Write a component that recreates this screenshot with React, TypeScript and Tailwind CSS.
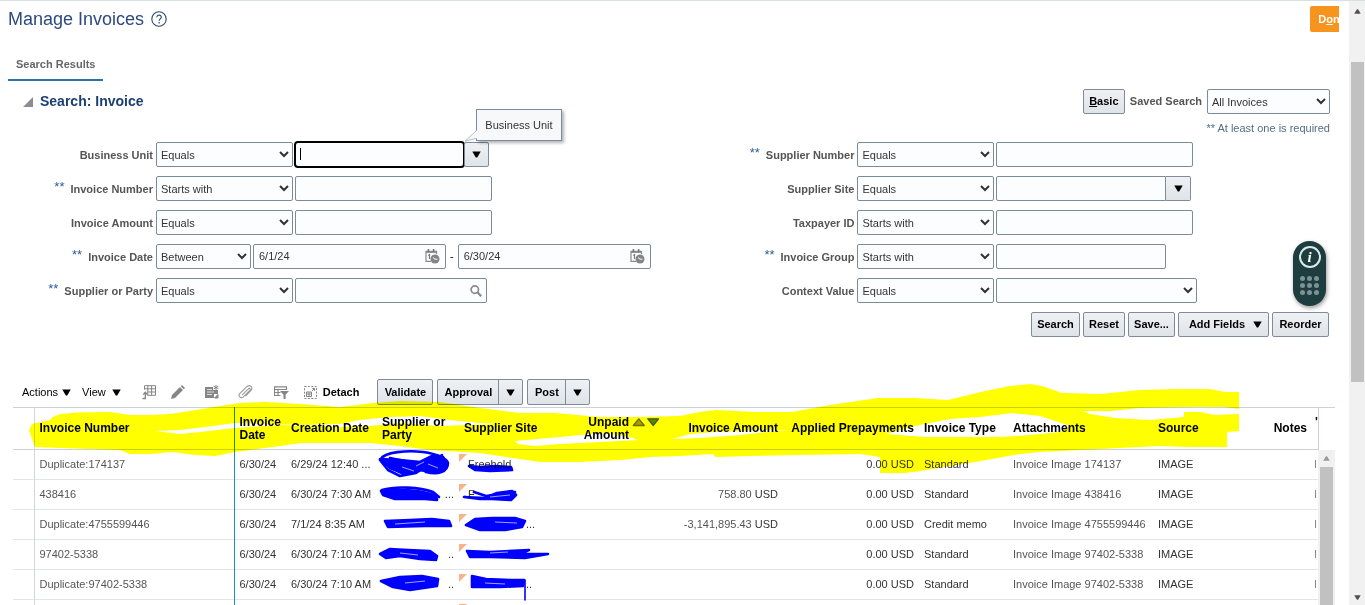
import React from "react";

const fieldBox = "h-[25px] rounded-[2px] border border-[#7d8b96] bg-[#fcfdfe] text-[11px] text-[#333]";
const buttonBox =
  "flex h-[25px] items-center justify-center rounded-[2px] border border-[#7f8b9b] bg-linear-to-b from-[#eff1f4] to-[#dfe4e9] text-[11px] font-bold text-black";

function Triangle({ className = "" }: { className?: string }) {
  return (
    <svg className={className} width="9" height="7" viewBox="0 0 9 7" aria-hidden="true">
      <path d="M0.3 0.5h8.4L5.2 6.5H3.8z" fill="currentColor" />
    </svg>
  );
}

function CalendarIcon() {
  return (
    <svg width="15" height="15" viewBox="0 0 15 15" fill="none" aria-hidden="true">
      <path d="M6 12.3H1V2.3h10.5V5" stroke="#8a8a8a" strokeWidth="1.2" />
      <path d="M1 3.2h10.5" stroke="#8a8a8a" strokeWidth="1.4" />
      <path d="M3.4 0v3M8.6 0v3" stroke="#777" strokeWidth="1.6" />
      <path d="M3.3 6.4L4.5 5.6V10" stroke="#777" strokeWidth="1.2" />
      <circle cx="10" cy="10" r="4.5" fill="#858585" />
      <path d="M8 8.6l2 1.6h2.4" stroke="#fff" strokeWidth="1" />
    </svg>
  );
}

function SearchGlyph() {
  return (
    <svg width="12" height="12" viewBox="0 0 12 12" fill="none" stroke="#8a8a8a" aria-hidden="true">
      <circle cx="4.8" cy="4.6" r="3.7" strokeWidth="1.7" />
      <path d="M7.5 7.3l3.7 3.9" strokeWidth="2.2" />
    </svg>
  );
}

type Kind = "text" | "combo" | "focus" | "short" | "dates" | "lookup" | "select";

interface Field {
  label: string;
  starred?: boolean;
  op: string;
  kind: Kind;
}

const leftFields: Field[] = [
  { label: "Business Unit", op: "Equals", kind: "focus" },
  { label: "Invoice Number", starred: true, op: "Starts with", kind: "text" },
  { label: "Invoice Amount", op: "Equals", kind: "text" },
  { label: "Invoice Date", starred: true, op: "Between", kind: "dates" },
  { label: "Supplier or Party", starred: true, op: "Equals", kind: "lookup" },
];

const rightFields: Field[] = [
  { label: "Supplier Number", starred: true, op: "Equals", kind: "text" },
  { label: "Supplier Site", op: "Equals", kind: "combo" },
  { label: "Taxpayer ID", op: "Starts with", kind: "text" },
  { label: "Invoice Group", starred: true, op: "Starts with", kind: "short" },
  { label: "Context Value", op: "Equals", kind: "select" },
];

function DateBox({ value, label, id }: { value: string; label: string; id?: string }) {
  return (
    <span className={`${fieldBox} flex w-[193px] items-center pr-[5px]`}>
      <input id={id} aria-label={label} defaultValue={value} className="min-w-0 flex-1 pl-[5px] outline-none" />
      <button type="button" aria-label={`Pick ${label}`}>
        <CalendarIcon />
      </button>
    </span>
  );
}

function FieldControl({ field, id }: { field: Field; id: string }) {
  switch (field.kind) {
    case "focus":
      return (
        <div className="relative flex">
          <input
            id={id}
            className="h-[25px] w-[169px] rounded-[3px] bg-[#fcfdfe] px-[5px] text-[11px] outline-2 -outline-offset-1 outline-black"
          />
          <span className="absolute top-[6px] left-[5px] h-3 w-px bg-black" />
          <button type="button" aria-label="Business Unit list" className={`${buttonBox} w-[25px]`}>
            <Triangle />
          </button>
          <div
            role="tooltip"
            className="absolute -top-[33px] left-[181px] flex h-8 w-[86px] items-center justify-center border border-[#7d8b9b] bg-[#f7f8f9] text-[11px] whitespace-nowrap text-[#333] shadow-[2px_2px_3px_rgba(0,0,0,0.3)]"
          >
            Business Unit
            <svg className="absolute top-[18px] -left-[13px]" width="14" height="14" viewBox="0 0 14 14" aria-hidden="true">
              <path d="M13.5 2L1 13.2 13.5 10z" fill="#f7f8f9" />
              <path d="M12.5 2.5L1 13.2 13 10.2" fill="none" stroke="#b4bcc4" />
            </svg>
          </div>
        </div>
      );
    case "combo":
      return (
        <div className="flex">
          <input id={id} className={`${fieldBox} w-[170px] rounded-r-none px-[5px]`} />
          <button type="button" aria-label={`${field.label} list`} className={`${buttonBox} w-[25px] rounded-l-none border-l-0`}>
            <Triangle />
          </button>
        </div>
      );
    case "dates":
      return (
        <div className="flex items-center gap-1 text-[11px]">
          <DateBox id={id} value="6/1/24" label="start date" />
          <span>-</span>
          <DateBox value="6/30/24" label="end date" />
        </div>
      );
    case "lookup":
      return (
        <span className={`${fieldBox} flex w-[192px] items-center pr-1`}>
          <input id={id} className="min-w-0 flex-1 pl-[5px] outline-none" />
          <button type="button" aria-label="Find supplier">
            <SearchGlyph />
          </button>
        </span>
      );
    case "short":
      return <input id={id} className={`${fieldBox} w-[170px] px-[5px]`} />;
    case "select":
      return (
        <select id={id} className={`${fieldBox} w-[201px]`}>
          <option></option>
        </select>
      );
    default:
      return <input id={id} className={`${fieldBox} w-[197px] px-[5px]`} />;
  }
}

function FieldColumn({ fields, prefix }: { fields: Field[]; prefix: string }) {
  return (
    <div className="flex flex-col gap-[9px]">
      {fields.map((f, i) => {
        const id = `${prefix}${i}`;
        return (
          <div key={id} className="flex items-center">
            <label htmlFor={id} className="flex w-[153px] justify-end gap-1.5 text-[11px] leading-4 font-bold text-[#555]">
              {f.starred && <span className="-mt-0.5 text-[13px] font-normal text-[#2a6099]">**</span>}
              {f.label}
            </label>
            <select
              aria-label={`${f.label} operator`}
              className={`${fieldBox} mr-0.5 ml-[3px] ${f.kind === "dates" ? "w-[95px]" : "w-[137px]"}`}
            >
              <option>{f.op}</option>
            </select>
            <FieldControl field={f} id={id} />
          </div>
        );
      })}
    </div>
  );
}

function ToolbarIcons() {
  const c = "#858585";
  return (
    <div className="ml-[21px] flex items-center">
      <button type="button" aria-label="Create" className="w-[29px]">
        <svg width="14" height="15" viewBox="0 0 14 15" fill="none" stroke={c}>
          <path d="M2.5 4.5V.7h11v9.6H5.5M2.5 3.8h11M5.8.7v9.6M9.6.7v9.6M5.5 7h8" />
          <path d="M.5 13.5h2.8V8M1.2 9.6L3.3 7.2l2.1 2.4" strokeWidth="1.3" />
        </svg>
      </button>
      <button type="button" aria-label="Edit" className="w-[34px]">
        <svg width="14" height="14" viewBox="0 0 14 14" fill={c}>
          <path d="M0 14l1-4L9 2l3 3-8 8zM9.8 1.2L11 0l3 3-1.2 1.2z" />
        </svg>
      </button>
      <button type="button" aria-label="Duplicate" className="w-[33px]">
        <svg width="14" height="14" viewBox="0 0 14 14" fill="none" stroke={c}>
          <path d="M0 2h8v3h5v4H9v4H0z" fill={c} stroke="none" />
          <path d="M2 4.5h5M2 7h7M2 9.5h5" stroke="#ddd" />
          <path d="M11 0v5M8.6 1.2l4.8 2.6M13.4 1.2L8.6 3.8" />
          <path d="M13 9.5L9.5 13H13z" fill={c} />
        </svg>
      </button>
      <button type="button" aria-label="Attach" className="w-9">
        <svg width="15" height="14" viewBox="0 0 15 14" fill="none" stroke="#9a9a9a" strokeWidth="1.1">
          <path d="M4 10.2l6.4-6.3c1.2-1.1 2.6.2 1.5 1.4l-6.5 6.5c-2.5 2.2-5.9-1-3.5-3.5L8.8 1.7c3-2.8 6.8.8 4 3.9L7.5 11" />
        </svg>
      </button>
      <button type="button" aria-label="Query by example" className="w-[30px]">
        <svg width="15" height="13" viewBox="0 0 15 13" fill="none" stroke={c}>
          <path d="M.5.8h12v2.7H.5zM.5 3.5v3h6M.5 6.5v3h6M4 3.5v6" strokeWidth="1.2" />
          <path d="M6 5h9l-3.4 3.8V13H9.5V8.8z" fill={c} stroke="none" />
        </svg>
      </button>
      <button type="button" className="flex items-center gap-1.5 text-[11px] font-bold text-black">
        <svg width="13" height="13" viewBox="0 0 13 13" fill="none" stroke={c}>
          <path d="M.5.5h12v12H.5z" strokeDasharray="2 1.4" />
          <path d="M2.5 6h5v4.5h-5zM2.5 8h5M5 6v4.5M8 5l2.5-2.5M8.2 2.5h2.3v2.3" />
        </svg>
        Detach
      </button>
    </div>
  );
}

function MenuButton({ label, width }: { label: string; width: string }) {
  return (
    <div className={`${buttonBox} h-[26px] ${width}`}>
      <button type="button" className="flex-1">
        {label}
      </button>
      <button type="button" aria-label={`${label} options`} className="flex h-full w-6 items-center justify-center border-l border-[#7f8b9b]">
        <Triangle />
      </button>
    </div>
  );
}

const rows = [
  ["Duplicate:174137", "6/29/24 12:40 ...", "", "Standard", "174137"],
  ["438416", "6/30/24 7:30 AM", "758.80", "Standard", "438416"],
  ["Duplicate:4755599446", "7/1/24 8:35 AM", "-3,141,895.43", "Credit memo", "4755599446"],
  ["97402-5338", "6/30/24 7:10 AM", "", "Standard", "97402-5338"],
  ["Duplicate:97402-5338", "6/30/24 7:10 AM", "", "Standard", "97402-5338"],
];

const supplierHints = ["", "...", "", "..", ".."];
const siteHints = ["Freehold", "F", "...", "", ".."];

function InvoiceTable() {
  return (
    <table className="w-full table-fixed text-left text-[11px] text-[#333] [&_td]:px-[5px] [&_td]:whitespace-nowrap [&_th]:px-[5px]">
      <colgroup>
        <col className="w-[21px]" />
        <col />
        <col className="w-[52px]" />
        <col className="w-[91px]" />
        <col className="w-[82px]" />
        <col className="w-[91px]" />
        <col className="w-[114px]" />
        <col className="w-[119px]" />
        <col className="w-[136px]" />
        <col className="w-[89px]" />
        <col className="w-[145px]" />
        <col className="w-[76px]" />
        <col className="w-[83px]" />
        <col className="w-[6px]" />
      </colgroup>
      <thead>
        <tr className="h-[42px] border-y border-[#c9d2da] text-[12px] leading-[13px] text-black">
          <th className="border-r border-r-[#d0d6dc]" />
          <th className="border-r border-r-[#1a8fbf]">Invoice Number</th>
          <th>Invoice Date</th>
          <th className="whitespace-nowrap">Creation Date</th>
          <th>Supplier or Party</th>
          <th>Supplier Site</th>
          <th className="pr-0.5!">
            <div className="flex items-start justify-end gap-[3px]">
              <span className="text-right">
                Unpaid
                <br />
                Amount
              </span>
              <svg width="30" height="12" viewBox="0 0 30 12" strokeWidth="1.3" strokeLinejoin="round" aria-hidden="true">
                <path d="M1.3 9.5L6.8 2.8l5.5 6.7z" fill="#a8a000" stroke="#6e6a00" />
                <path d="M15.8 2.8h10.8l-5.4 6.7z" fill="#5f8400" stroke="#3f5f00" />
              </svg>
            </div>
          </th>
          <th className="text-right whitespace-nowrap">Invoice Amount</th>
          <th className="text-right whitespace-nowrap">Applied Prepayments</th>
          <th className="whitespace-nowrap">Invoice Type</th>
          <th>Attachments</th>
          <th>Source</th>
          <th className="text-right">Notes</th>
          <th className="overflow-hidden align-top">
            <div className="-ml-0.5 pt-2">'</div>
          </th>
        </tr>
      </thead>
      <tbody>
        {rows.map(([number, created, amount, type, image], i) => (
          <tr key={i} className="h-[30px] border-b border-[#e2e6ea]">
            <td className="border-r border-r-[#d0d6dc]" />
            <td className="border-r border-r-[#1a8fbf] text-[#555]">{number}</td>
            <td>6/30/24</td>
            <td>{created}</td>
            <td className="text-right">{supplierHints[i]}</td>
            <td className="relative pl-[9px]!">
              <svg className="absolute top-1 left-0" width="8" height="8" viewBox="0 0 8 8" aria-hidden="true">
                <path d="M0 0h8L0 8z" fill="#f5b48a" />
              </svg>
              <span className={i === 2 || i === 4 ? "pl-[58px]" : ""}>{siteHints[i]}</span>
            </td>
            <td />
            <td className="text-right">
              {amount && (
                <>
                  <a href="#amount" className="text-[#555]">
                    {amount}
                  </a>{" "}
                  USD
                </>
              )}
            </td>
            <td className="text-right">0.00 USD</td>
            <td>{type}</td>
            <td>
              <a href="#image" className="text-[#555]">
                Invoice Image {image}
              </a>
            </td>
            <td>IMAGE</td>
            <td />
            <td className="overflow-hidden px-0.5! text-[#888]">I</td>
          </tr>
        ))}
        <tr className="h-[30px]">
          <td className="border-r border-r-[#d0d6dc]" />
          <td className="border-r border-r-[#1a8fbf]" />
          <td colSpan={3} />
          <td className="relative">
            <svg className="absolute top-1 left-0" width="8" height="8" viewBox="0 0 8 8" aria-hidden="true">
              <path d="M0 0h8L0 8z" fill="#f5b48a" />
            </svg>
          </td>
          <td colSpan={8} />
        </tr>
      </tbody>
    </table>
  );
}

function Annotations() {
  return (
    <svg
      className="pointer-events-none absolute top-0 left-0 mix-blend-multiply"
      width="1340"
      height="605"
      viewBox="0 1 1340 605"
      aria-hidden="true"
    >
      <path
        fill="#ffff00"
        fillRule="evenodd"
        d="M29 430L32 424 50 420 53 417 60 414 78 412.5 110 412 130 415 150 415 170 414 190 411 220 406 240 403 265 402 300 404 340 407 373 403 400 401 440 402 480 408 520 413 555 413 600 417 640 417 680 416 700 412 716 410 755 412 792 412 830 405 878 398 915 398 948 400 985 391 1010 386 1030 384 1042 386 1062 393 1100 394 1140 390 1180 389 1210 389 1225 392 1239 392V409L1225 407 1190 407 1140 408 1110 411 1083 411 1090 414 1115 418 1150 420 1184 417V412H1200L1215 415 1239 414V431L1227 432V447L1190 447 1160 446 1100 449 1040 452 1020 454 975 462 950 466 920 471 905 473H880V457L860 454 800 455 750 456 715 457 713 454 680 456 650 457 620 460 580 462 540 462 520 459 480 453 430 450 400 446 370 443 300 443 280 446 235 452 215 456 195 455 172 452 150 454 130 454 120 450 90 449 60 448 35 447z
        M155 431L180 430 205 427 235 423 270 424 305 425 340 424 360 420 390 417 420 416 450 420 480 423 500 424 470 425 440 426 400 423 370 426 340 427 280 425 235 428 200 432 180 434z
        M515 441L560 437 600 433 630 437 638 440 600 442 560 444 535 446 518 444z
        M672 439L690 434 715 432 760 430 790 430 775 431 740 435 700 438z
        M886 434L915 426 950 419 980 417 1012 413 1040 416 1070 426 1060 432 1030 435 1000 437 925 437z"
      />
      <g fill="none" stroke="#0000ff" strokeWidth="2.6" strokeLinecap="round" strokeLinejoin="round">
        <path d="M381 459C384 452 408 450 423 452 438 454 447 459 448 463 448 472 438 475 426 472 416 462 400 460 390 458M380 460L388 470 400 476 416 473 428 465 442 455M390 467L404 474 424 468 437 457 446 464 437 472 422 470" />
        <path fill="#0000ff" d="M380 459L400 460 420 462 434 455 443 457 447 464 442 471 428 471 418 470 405 474 390 468z" />
        <path fill="#0000ff" d="M469 466L480 467 495 466 511 467 512 470 490 471 475 470z" />
        <path fill="#0000ff" d="M381 491L392 489 418 491 436 495 437 500 425 499 395 499 383 495z" />
        <path d="M382 490C395 486 420 487 433 492L439 497" />
        <path fill="#0000ff" d="M464 497L485 498 497 493 512 491 516 495 511 500 492 499 480 499z" />
        <path d="M474 492L486 496 500 494 515 492" />
        <path fill="#0000ff" d="M385 521L410 520 432 519 449 521 451 526 425 526 388 527z" />
        <path fill="#0000ff" d="M466 525L475 519 492 518 515 518 525 521 522 527 505 530 480 530z" />
        <path fill="#0000ff" d="M380 554L390 549 408 550 430 551 437 556 436 560 420 559 400 556 386 558z" />
        <path fill="#0000ff" d="M467 551L490 552 529 550 520 554 548 554 525 558 490 557 470 557z" />
        <path fill="#0000ff" d="M381 581L400 577 422 576 438 579 437 586 410 590 393 587z" />
        <path fill="#0000ff" d="M472 576L486 579 510 580 524 580 523 586 500 587 472 587z" />
        <path strokeWidth="1.6" d="M525 580V600" />
      </g>
      <g fill="none" stroke="#fff" strokeWidth="0.8" opacity="0.8">
        <path d="M402 467l12 4M428 464l10 4M416 466l8-4M490 497l20-2M395 524l30-2M495 522l22 1M400 553l18 2M490 553l18-1M405 583l20-2M485 583l20 1" />
      </g>
    </svg>
  );
}

export default function App() {
  return (
    <div className="flex h-screen overflow-hidden border-t border-[#d9e0e0] bg-white font-['Liberation_Sans',Arial,sans-serif]">
      <main className="relative flex min-w-0 flex-1 flex-col overflow-hidden">
        <header className="mr-[10px] flex h-9 shrink-0 items-center overflow-hidden pl-2">
          <h1 className="text-[18px] text-[#2b4a7d]">Manage Invoices</h1>
          <button type="button" aria-label="Help" className="ml-[7px]">
            <svg width="16" height="16" viewBox="0 0 16 16" fill="none" stroke="#2b4a6d">
              <circle cx="8" cy="8" r="7.2" strokeWidth="1.1" />
              <path d="M5.8 6.3c0-3 4.6-2.8 4.5-.1 0 1.7-2.2 1.7-2.2 3.6M8.1 11v1.4" strokeWidth="1.2" />
            </svg>
          </button>
          <div className="ml-auto w-[29px] overflow-hidden">
            <button type="button" className="h-[26px] w-11 rounded-[2px] bg-[#f7941e] text-[11px] font-bold text-white">
              D<u>o</u>ne
            </button>
          </div>
        </header>

        <nav className="mt-3 flex shrink-0 pl-2">
          <a href="#results" className="flex h-8 items-center border-b-2 border-[#2a74ae] px-2 text-[11px] font-bold whitespace-nowrap text-[#666]">
            Search Results
          </a>
        </nav>

        <form className="mt-2 shrink-0" onSubmit={(e) => e.preventDefault()}>
          <div className="flex items-center pr-[19px] pl-[23px]">
            <svg width="10" height="10" viewBox="0 0 10 10" aria-hidden="true">
              <path d="M10 0v10H0z" fill="#8b8d90" />
            </svg>
            <h2 className="ml-[7px] text-[14px] font-bold text-[#1c3f73]">Search: Invoice</h2>
            <button type="button" className={`${buttonBox} ml-auto w-[42px]`}>
              <u>B</u>asic
            </button>
            <label htmlFor="saved" className="mx-[5px] text-[11px] font-bold text-[#555]">
              Saved Search
            </label>
            <select id="saved" className={`${fieldBox} w-[123px]`}>
              <option>All Invoices</option>
            </select>
          </div>
          <p className="flex h-7 items-center justify-end pr-[19px] text-[11px] text-[#4f7185]">** At least one is required</p>
          <div className="grid grid-cols-[52%_48%]">
            <FieldColumn fields={leftFields} prefix="l" />
            <FieldColumn fields={rightFields} prefix="r" />
          </div>
          <div className="mt-[9px] flex justify-end gap-[3px] pr-5">
            <button type="submit" className={`${buttonBox} w-[49px]`}>Search</button>
            <button type="reset" className={`${buttonBox} w-[42px]`}>Reset</button>
            <button type="button" className={`${buttonBox} w-[47px]`}>Save...</button>
            <button type="button" className={`${buttonBox} w-[91px] gap-2 pl-1`}>
              Add Fields
              <Triangle />
            </button>
            <button type="button" className={`${buttonBox} w-[57px]`}>Reorder</button>
          </div>
        </form>

        <div className="mt-[42px] flex h-[26px] shrink-0 items-center pl-[22px] text-[11px] text-black">
          <button type="button" className="flex items-center gap-1">
            Actions
            <Triangle />
          </button>
          <button type="button" className="ml-[11px] flex items-center gap-1.5">
            View
            <Triangle />
          </button>
          <ToolbarIcons />
          <button type="button" className={`${buttonBox} mr-1 ml-[18px] h-[26px] w-14`}>Validate</button>
          <MenuButton label="Approval" width="w-[86px]" />
          <span className="w-1" />
          <MenuButton label="Post" width="w-[63px]" />
        </div>

        <section className="mt-0.5 flex min-h-0 flex-1 overflow-hidden pr-[14px] pl-[13px]">
          <div className="min-w-0 flex-1 overflow-hidden">
            <InvoiceTable />
          </div>
          <div className="flex w-[17px] flex-col">
            <div className="h-[43px] shrink-0 border-t border-l border-[#c9d2da]" />
            <div className="flex flex-1 flex-col bg-[#f1f1f1]">
              <div className="flex h-[17px] shrink-0 items-center justify-center text-[#999]">
                <Triangle className="w-[7px] rotate-180" />
              </div>
              <div className="mr-0.5 ml-0.5 flex-1 bg-[#c1c1c1]" />
            </div>
          </div>
        </section>

        <Annotations />

        <div className="absolute top-60 right-[23px] flex h-[65px] w-[33px] flex-col items-center gap-2 rounded-full bg-[#1d3d3f] pt-[5px] shadow-[1px_2px_4px_rgba(0,0,0,0.4)]">
          <button
            type="button"
            aria-label="Information"
            className="flex size-[22px] items-center justify-center rounded-full border-2 border-[#dbe9ea] font-['Liberation_Serif',serif] text-[15px] leading-none font-bold text-white italic"
          >
            i
          </button>
          <div className="grid grid-cols-3 gap-[2px]">
            {Array.from({ length: 9 }, (_, i) => (
              <span key={i} className="size-[5px] rounded-full bg-[#7c9294]" />
            ))}
          </div>
        </div>
      </main>

      <div className="flex w-4 shrink-0 flex-col items-center bg-[#f1f1f1]" aria-hidden="true">
        <div className="flex h-[61px] w-full shrink-0 justify-center pt-[7px] text-[#505050]">
          <Triangle className="w-[7px] rotate-180" />
        </div>
        <div className="h-[53%] w-[13px] bg-[#c1c1c1]" />
        <div className="mt-auto pb-1 text-[#505050]">
          <Triangle className="w-[7px]" />
        </div>
      </div>
    </div>
  );
}
